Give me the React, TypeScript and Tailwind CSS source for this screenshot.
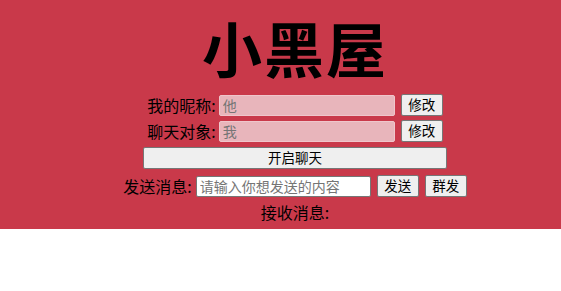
import React from 'react';

const font = { fontFamily: '"Microsoft YaHei", "Noto Sans CJK SC", "Noto Sans", sans-serif' };

function Btn({ children, className = '' }: { children: React.ReactNode; className?: string }) {
  return (
    <button
      className={
        'h-[22px] bg-[#efefef] border border-[#767676] rounded-[2px] text-[13.5px] leading-none text-black ' +
        className
      }
    >
      {children}
    </button>
  );
}

export default function App() {
  return (
    <div className="w-full bg-white" style={font}>
      <div className="bg-[#c9394a] pl-[29px] pb-[6px] flex flex-col items-center text-black">
        <h1 className="h-[94px] text-[60px] font-bold leading-[94px] tracking-[2px]">小黑屋</h1>

        <div className="h-[22px] flex items-center">
          <span className="text-[16px] leading-none">我的昵称:</span>
          <input
            className="ml-[3px] w-[176px] h-[21px] bg-[#e8b5bb] border border-[#efc6cb] rounded-[2px] px-[3px] text-[14px] outline-none placeholder:text-[#757575]"
            placeholder="他"
          />
          <Btn className="ml-[6px] w-[42px]">修改</Btn>
        </div>

        <div className="mt-[4px] h-[22px] flex items-center">
          <span className="text-[16px] leading-none">聊天对象:</span>
          <input
            className="ml-[3px] w-[176px] h-[21px] bg-[#e8b5bb] border border-[#efc6cb] rounded-[2px] px-[3px] text-[14px] outline-none placeholder:text-[#757575]"
            placeholder="我"
          />
          <Btn className="ml-[6px] w-[42px]">修改</Btn>
        </div>

        <div className="mt-[5px] h-[22px] flex items-center">
          <Btn className="w-[304px]">开启聊天</Btn>
        </div>

        <div className="mt-[6px] h-[22px] flex items-center">
          <span className="text-[16px] leading-none">发送消息:</span>
          <input
            className="ml-[4px] w-[175px] h-[21px] bg-white border border-[#767676] rounded-[2px] px-[3px] text-[14px] outline-none placeholder:text-[#757575]"
            placeholder="请输入你想发送的内容"
          />
          <Btn className="ml-[6px] w-[42px]">发送</Btn>
          <Btn className="ml-[6px] w-[42px]">群发</Btn>
        </div>

        <div className="mt-[4px] h-[22px] flex items-center">
          <span className="text-[16px] leading-none">接收消息:</span>
        </div>
      </div>
    </div>
  );
}
